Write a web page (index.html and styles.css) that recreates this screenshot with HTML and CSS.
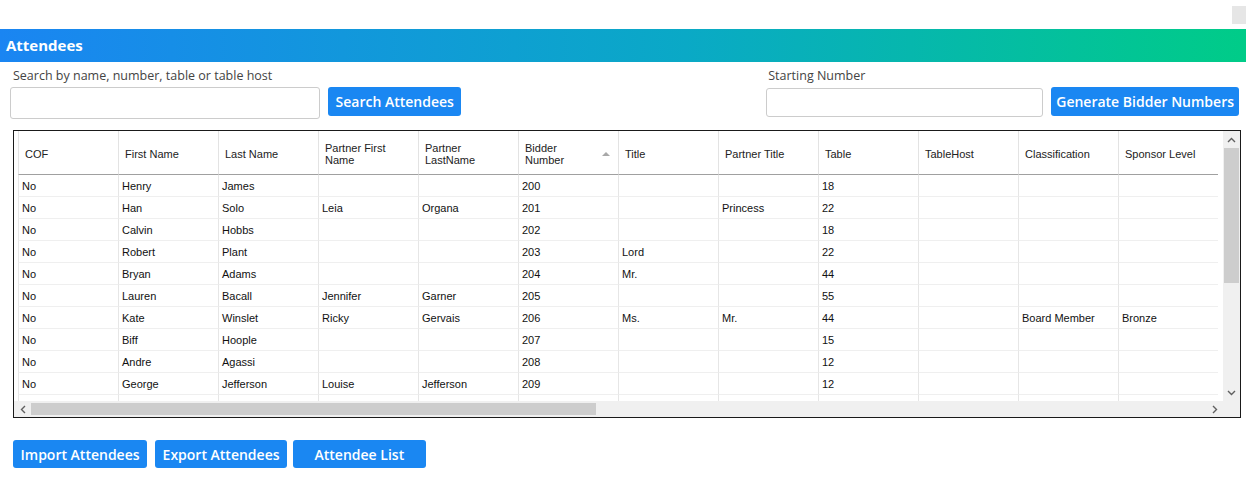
FILE: index.html
```html
<!DOCTYPE html>
<html lang="en">
<head>
  <meta charset="UTF-8" />
  <meta name="viewport" content="width=device-width, initial-scale=1.0"/>
  <title>Attendees</title>
  <link rel="stylesheet" href="styles.css">
</head>
<body>
  <div class="top-strip"><span class="corner"></span></div>
  <h1 class="title-bar">Attendees</h1>

  <div class="search-row">
    <div class="field-group">
      <label for="search">Search by name, number, table or table host</label>
      <div class="field-line">
        <input type="text" id="search" class="search-input">
        <button type="button" class="btn">Search Attendees</button>
      </div>
    </div>
    <div class="field-group right">
      <label for="startNumber">Starting Number</label>
      <div class="field-line">
        <input type="text" id="startNumber" class="start-input">
        <button type="button" class="btn narrow">Generate Bidder Numbers</button>
      </div>
    </div>
  </div>

  <div class="grid">
    <div class="grid-main">
      <div class="grid-view">
        <div class="row head">
          <div class="cell">COF</div>
          <div class="cell">First Name</div>
          <div class="cell">Last Name</div>
          <div class="cell">Partner First<br>Name</div>
          <div class="cell">Partner<br>LastName</div>
          <div class="cell sorted">Bidder<br>Number<span class="sort-arrow"></span></div>
          <div class="cell">Title</div>
          <div class="cell">Partner Title</div>
          <div class="cell">Table</div>
          <div class="cell">TableHost</div>
          <div class="cell">Classification</div>
          <div class="cell">Sponsor Level</div>
        </div>
        <div id="rows"></div>
      </div>
      <div class="vscroll">
        <span class="arrow"><svg width="9" height="6" viewBox="0 0 9 6"><path d="M1 5 L4.5 1.5 L8 5" fill="none" stroke="#606060" stroke-width="1.4"/></svg></span>
        <div class="vtrack"><div class="vthumb"></div></div>
        <span class="arrow"><svg width="9" height="6" viewBox="0 0 9 6"><path d="M1 1 L4.5 4.5 L8 1" fill="none" stroke="#606060" stroke-width="1.4"/></svg></span>
      </div>
    </div>
    <div class="hscroll">
      <span class="arrow"><svg width="6" height="9" viewBox="0 0 6 9"><path d="M5 1 L1.5 4.5 L5 8" fill="none" stroke="#606060" stroke-width="1.4"/></svg></span>
      <div class="htrack"><div class="hthumb"></div></div>
      <span class="arrow"><svg width="6" height="9" viewBox="0 0 6 9"><path d="M1 1 L4.5 4.5 L1 8" fill="none" stroke="#606060" stroke-width="1.4"/></svg></span>
      <span class="hcorner"></span>
    </div>
  </div>

  <div class="actions">
    <button type="button" class="btn">Import Attendees</button>
    <button type="button" class="btn">Export Attendees</button>
    <button type="button" class="btn wide">Attendee List</button>
  </div>

<script>
const attendees = [
  ["No", "Henry", "James", "", "", "200", "", "", "18", "", "", ""],
  ["No", "Han", "Solo", "Leia", "Organa", "201", "", "Princess", "22", "", "", ""],
  ["No", "Calvin", "Hobbs", "", "", "202", "", "", "18", "", "", ""],
  ["No", "Robert", "Plant", "", "", "203", "Lord", "", "22", "", "", ""],
  ["No", "Bryan", "Adams", "", "", "204", "Mr.", "", "44", "", "", ""],
  ["No", "Lauren", "Bacall", "Jennifer", "Garner", "205", "", "", "55", "", "", ""],
  ["No", "Kate", "Winslet", "Ricky", "Gervais", "206", "Ms.", "Mr.", "44", "", "Board Member", "Bronze"],
  ["No", "Biff", "Hoople", "", "", "207", "", "", "15", "", "", ""],
  ["No", "Andre", "Agassi", "", "", "208", "", "", "12", "", "", ""],
  ["No", "George", "Jefferson", "Louise", "Jefferson", "209", "", "", "12", "", "", ""],
  ["", "", "", "", "", "", "", "", "", "", "", ""]
];

function mostrarFilas() {
  const cont = document.getElementById("rows");
  cont.innerHTML = "";
  attendees.forEach(fila => {
    const celdas = fila.map(v => `<div class="cell">${v}</div>`).join("");
    cont.innerHTML += `<div class="row">${celdas}</div>`;
  });
}

mostrarFilas();
</script>
</body>
</html>
```

FILE: styles.css
```css
body { margin: 0; font-family: "Open Sans", "Noto Sans", sans-serif; color: #333; background: #fff; }

.top-strip { height: 29px; display: flex; justify-content: flex-end; }
.corner { width: 14px; height: 18px; margin-top: 6px; background: #e6e6e6; }

.title-bar {
  margin: 0;
  height: 33px;
  line-height: 33px;
  padding-left: 6px;
  font-size: 15px;
  font-weight: 700;
  color: #fff;
  background: linear-gradient(to right, #1a85f2, #0aa9c6 55%, #00cc88);
}

.search-row { display: flex; padding: 5px 7px 0 10px; }
.field-group label { display: block; font-size: 12.5px; line-height: 18px; margin: 0 0 2px 3px; color: #444; }
.field-group.right { margin-left: auto; }
.field-group.right label { margin-left: 2px; }
.field-line { display: flex; align-items: flex-start; gap: 8px; }

input { box-sizing: border-box; border: 1px solid #ccc; border-radius: 3px; font: inherit; }
.search-input { width: 310px; height: 32px; }
.start-input { width: 277px; height: 29px; margin-top: 1px; }

.btn {
  height: 29px;
  padding: 0 7.5px;
  border: none;
  border-radius: 3px;
  background: #1a87f2;
  color: #fff;
  font-family: "Open Sans", "Noto Sans", sans-serif;
  font-size: 14px;
  font-weight: 600;
  cursor: pointer;
}
.btn.narrow { padding: 0 5px; }

.grid {
  margin: 11px 0 0 13px;
  width: 1226px;
  border: 1px solid #1a1a1a;
  font-family: "Liberation Sans", Arial, sans-serif;
  font-size: 11px;
  color: #111;
}
.grid-main { display: flex; height: 270px; }
.grid-view { flex: 1; overflow: hidden; padding-left: 4px; }

.row { display: grid; grid-template-columns: repeat(12, 100px); height: 22px; }
.row .cell {
  box-sizing: border-box;
  border-left: 1px solid #e6e6e6;
  border-bottom: 1px solid #efefef;
  padding: 1px 0 0 3px;
  line-height: 20px;
  white-space: nowrap;
  overflow: hidden;
}
.row.head { height: 44px; }
.row.head .cell {
  position: relative;
  display: flex;
  align-items: center;
  padding: 2px 0 0 6px;
  line-height: 12px;
  border-left-color: #e3e3e3;
  border-bottom: 1px solid #a0a0a0;
  color: #222;
}
.sort-arrow {
  position: absolute;
  right: 8px;
  top: 21px;
  border-left: 4px solid transparent;
  border-right: 4px solid transparent;
  border-bottom: 4px solid #a8a8a8;
}

.vscroll { width: 17px; background: #f0f0f0; display: flex; flex-direction: column; }
.vscroll .arrow { height: 17px; display: flex; align-items: center; justify-content: center; }
.vtrack { flex: 1; padding: 0 1px; }
.vthumb { height: 135px; background: #cdcdcd; }

.hscroll { display: flex; height: 16px; background: #f0f0f0; align-items: stretch; }
.hscroll .arrow { width: 17px; display: flex; align-items: center; justify-content: center; }
.htrack { flex: 1; padding: 2px 0; }
.hthumb { width: 565px; height: 100%; background: #cdcdcd; }
.hcorner { width: 17px; background: #f0f0f0; }

.actions { display: flex; gap: 8px; margin: 22px 0 0 13px; }
.actions .btn { height: 28px; }
.actions .btn.wide { margin-left: -2px; padding: 0 21.5px; }
```
